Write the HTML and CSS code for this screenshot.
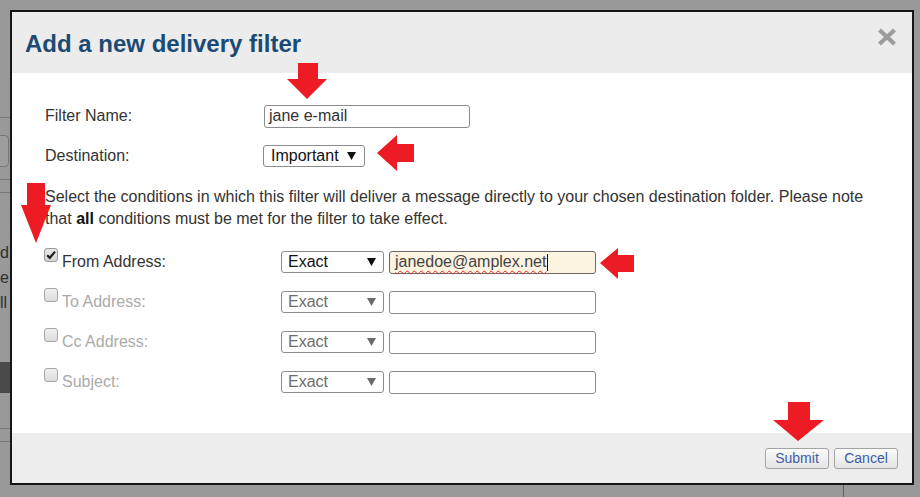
FILE: index.html
```html
<!DOCTYPE html>
<html>
<head>
<meta charset="utf-8">
<title>Add a new delivery filter</title>
<link rel="stylesheet" href="styles.css">
</head>
<body>
<div class="page">
  <div class="page-strip">
    <div class="bg-line l1"></div>
    <div class="bg-btn"></div>
    <div class="bg-line l2"></div>
    <div class="bg-line l3"></div>
    <div class="bg-text">d<br>e<br>ll</div>
    <div class="bg-dark"></div>
    <div class="bg-line l4"></div>
    <div class="bg-line l5"></div>
  </div>
  <div class="page-rest">
    <div class="bg-vline"></div>
  </div>
</div>

<div class="dialog">
  <div class="dialog-header">
    <h1 class="dialog-title">Add a new delivery filter</h1>
    <svg class="close-icon" width="20" height="18" viewBox="0 0 20 18"><path d="M2.5 2 L17.5 16 M17.5 2 L2.5 16" stroke="#9c9c9c" stroke-width="4.2" fill="none"/></svg>
  </div>

  <div class="dialog-body">
    <div class="field">
      <div class="field-label">Filter Name:</div>
      <div class="textbox name-box">jane e-mail</div>
    </div>
    <div class="field">
      <div class="field-label">Destination:</div>
      <div class="selectbox dest-select"><span>Important</span><svg class="tri" width="9" height="8" viewBox="0 0 9 8"><path d="M0 0 H9 L4.5 8 Z" fill="#111"/></svg></div>
    </div>

    <p class="note"><span>Select the conditions in which this filter will deliver a message directly to your chosen destination folder. Please note</span><br><span>that <b>all</b> conditions must be met for the filter to take effect.</span></p>

    <div class="conditions">
      <div class="cond">
        <div class="cond-label">
          <span class="check checked"><svg width="12" height="12" viewBox="0 0 12 12"><path d="M2.2 6.2 L4.8 8.8 L10 2.6" stroke="#1e1e1e" stroke-width="2.2" fill="none"/></svg></span>
          <span class="cond-text">From Address:</span>
        </div>
        <div class="selectbox cond-select"><span>Exact</span><svg class="tri" width="9" height="8" viewBox="0 0 9 8"><path d="M0 0 H9 L4.5 8 Z" fill="#111"/></svg></div>
        <div class="textbox cond-input active"><span class="typed">janedoe@amplex.net</span><span class="caret"></span></div>
      </div>
      <div class="cond off">
        <div class="cond-label">
          <span class="check"></span>
          <span class="cond-text">To Address:</span>
        </div>
        <div class="selectbox cond-select"><span>Exact</span><svg class="tri" width="9" height="8" viewBox="0 0 9 8"><path d="M0 0 H9 L4.5 8 Z" fill="#6a6a6a"/></svg></div>
        <div class="textbox cond-input"></div>
      </div>
      <div class="cond off">
        <div class="cond-label">
          <span class="check"></span>
          <span class="cond-text">Cc Address:</span>
        </div>
        <div class="selectbox cond-select"><span>Exact</span><svg class="tri" width="9" height="8" viewBox="0 0 9 8"><path d="M0 0 H9 L4.5 8 Z" fill="#6a6a6a"/></svg></div>
        <div class="textbox cond-input"></div>
      </div>
      <div class="cond off">
        <div class="cond-label">
          <span class="check"></span>
          <span class="cond-text">Subject:</span>
        </div>
        <div class="selectbox cond-select"><span>Exact</span><svg class="tri" width="9" height="8" viewBox="0 0 9 8"><path d="M0 0 H9 L4.5 8 Z" fill="#6a6a6a"/></svg></div>
        <div class="textbox cond-input"></div>
      </div>
    </div>
  </div>

  <div class="dialog-footer">
    <button class="btn">Submit</button>
    <button class="btn">Cancel</button>
  </div>
</div>

<svg class="arrows" width="920" height="497" viewBox="0 0 920 497">
  <polygon fill="#ed1c24" points="298,63 318,63 318,79 327,79 307,99 287,79 298,79"/>
  <polygon fill="#ed1c24" points="377,153 397,135 397,144 414,144 414,162 397,162 397,171"/>
  <polygon fill="#ed1c24" points="27,183 45,183 45,205 51,205 36,243 21,205 27,205"/>
  <polygon fill="#ed1c24" points="600,263 618,248 618,255 634,255 634,272 618,272 618,279"/>
  <polygon fill="#ed1c24" points="788,402 810,402 810,420 824,420 798,441 773,420 788,420"/>
</svg>
</body>
</html>
```

FILE: styles.css
```css
html, body {
  margin: 0;
  padding: 0;
}

body {
  width: 920px;
  height: 497px;
  overflow: hidden;
  position: relative;
  background: #999999;
  font-family: "Liberation Sans", Arial, sans-serif;
}

/* page behind the modal overlay */
.page {
  display: flex;
  height: 497px;
}

.page-strip {
  width: 10px;
  flex: none;
  overflow: hidden;
}

.page-rest {
  flex: 1;
  padding-top: 485px;
}

.bg-vline {
  margin-left: 833px;
  width: 1px;
  height: 12px;
  background: #5e5e5e;
}

.bg-line {
  height: 1px;
  background: #777777;
}

.l1 { margin-top: 117px; }
.l2 { margin-top: 12px; }
.l3 { margin-top: 12px; }
.l4 { margin-top: 35px; }
.l5 { margin-top: 12px; }

.bg-btn {
  margin-top: 17px;
  margin-left: -5px;
  width: 12px;
  height: 30px;
  border: 1px solid #767676;
  border-radius: 4px;
  background: #9d9d9d;
}

.bg-text {
  margin-top: 47px;
  font-size: 16px;
  line-height: 25px;
  color: #2e2e2e;
}

.bg-dark {
  margin-top: 47px;
  height: 31px;
  background: #4a4a4a;
}

/* dialog */
.dialog {
  position: absolute;
  left: 10px;
  top: 10px;
  width: 904px;
  height: 475px;
  box-sizing: border-box;
  border: 2px solid #161616;
  display: flex;
  flex-direction: column;
  background: #ffffff;
}

.dialog-header {
  height: 61px;
  flex: none;
  box-sizing: border-box;
  background: #ececec;
  display: flex;
  align-items: center;
  justify-content: space-between;
  padding: 2px 15px 0 13px;
}

.dialog-title {
  margin: 0;
  font-size: 24px;
  font-weight: bold;
  color: #1b4a74;
}

.close-icon {
  align-self: flex-start;
  margin-top: 14px;
  display: block;
}

.dialog-body {
  height: 360px;
  flex: none;
  box-sizing: border-box;
  padding: 23px 20px 0 33px;
  background: #ffffff;
  font-size: 16px;
  color: #333333;
}

.field {
  display: flex;
  align-items: center;
  height: 40px;
}

.field-label {
  width: 219px;
  flex: none;
}

.textbox {
  box-sizing: border-box;
  border: 1px solid #8c8c8c;
  border-radius: 3px;
  background: #ffffff;
  font-size: 16px;
  color: #333333;
  display: flex;
  align-items: center;
  white-space: nowrap;
}

.name-box {
  width: 206px;
  height: 23px;
  padding-left: 4px;
}

.selectbox {
  box-sizing: border-box;
  border: 1px solid #8c8c8c;
  border-radius: 3px;
  background: #ffffff;
  font-size: 16px;
  color: #111111;
  display: flex;
  align-items: center;
  justify-content: space-between;
  white-space: nowrap;
}

.selectbox .tri {
  display: block;
  flex: none;
}

.dest-select {
  margin-left: -1px;
  width: 102px;
  height: 22px;
  padding: 0 8px 0 7px;
}

.note {
  margin: 10px 0 0 0;
  line-height: 22px;
  font-size: 16px;
  color: #333333;
}

.note b {
  color: #111111;
}

.conditions {
  margin-top: 12px;
}

.cond {
  display: flex;
  align-items: center;
  height: 40px;
}

.cond-label {
  width: 236px;
  flex: none;
  display: flex;
  align-items: center;
}

.check {
  box-sizing: border-box;
  width: 14px;
  height: 14px;
  margin-left: -1px;
  margin-bottom: 14px;
  border: 1px solid #a8a8a8;
  border-radius: 3px;
  background: linear-gradient(#f0f0f0, #dcdcdc);
  display: flex;
  align-items: center;
  justify-content: center;
  flex: none;
}

.check.checked {
  border-color: #9a9a9a;
  background: linear-gradient(#e8e8e8, #d4d4d4);
}

.check svg {
  display: block;
}

.cond-text {
  margin-left: 4px;
  color: #333333;
}

.cond.off .cond-text {
  color: #aaaaaa;
}

.cond-select {
  width: 103px;
  height: 22px;
  padding: 0 7px 0 6px;
}

.cond.off .cond-select {
  color: #6e6e6e;
}

.cond-input {
  margin-left: 5px;
  width: 207px;
  height: 23px;
  padding-left: 5px;
}

.cond-input.active {
  background: #fdf3e1;
  border-color: #6b6b6b;
  color: #444444;
}

.typed {
  text-decoration: underline wavy #e0262b;
  text-decoration-thickness: 1px;
  text-underline-offset: 3px;
  text-decoration-skip-ink: none;
}

.caret {
  width: 1px;
  height: 17px;
  background: #111111;
  margin-left: 1px;
}

.dialog-footer {
  flex: 1;
  background: #ededed;
  display: flex;
  align-items: center;
  justify-content: flex-end;
  gap: 5px;
  padding-right: 14px;
}

.btn {
  box-sizing: border-box;
  width: 64px;
  height: 21px;
  padding: 0;
  border: 1px solid #a3a3a3;
  border-radius: 3px;
  background: linear-gradient(#fbfbfb, #e4e4e4);
  font-family: "Liberation Sans", Arial, sans-serif;
  font-size: 14px;
  color: #3d5ba8;
}

.arrows {
  position: absolute;
  left: 0;
  top: 0;
  pointer-events: none;
}
```
